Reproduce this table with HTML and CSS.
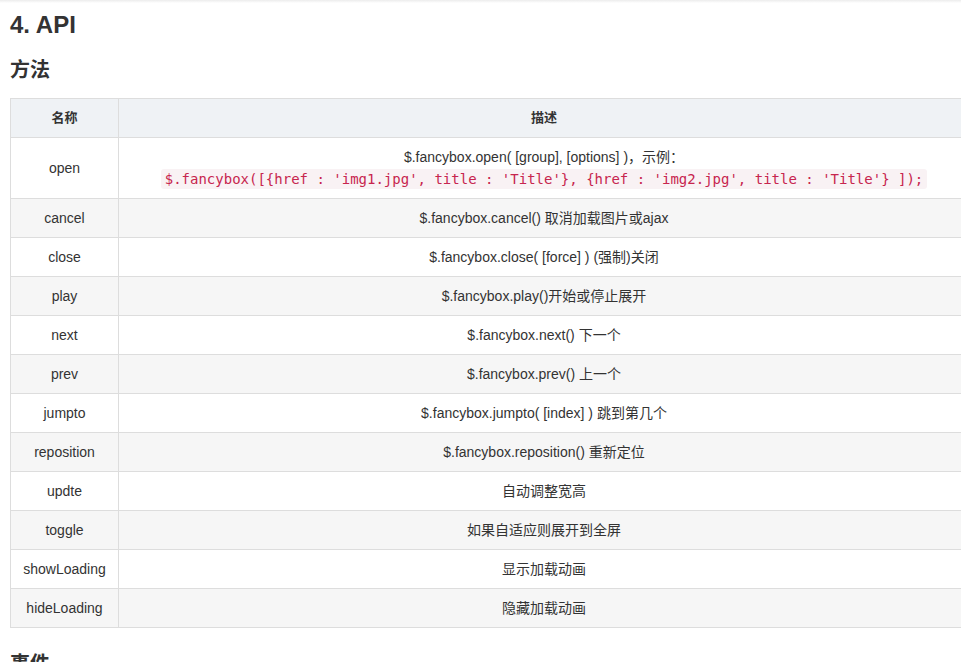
FILE: index.html
```html
<!DOCTYPE html>
<html lang="zh">
<head>
<meta charset="utf-8">
<title>API</title>
<link rel="stylesheet" href="styles.css">
</head>
<body>
<div class="topshadow"></div>
<div class="content">
  <h2 class="title">4. API</h2>
  <h3 class="subtitle">方法</h3>
  <table class="api">
    <thead>
      <tr><th class="c-name">名称</th><th>描述</th></tr>
    </thead>
    <tbody>
      <tr><td class="c-name">open</td><td>$.fancybox.open( [group], [options] )，示例：<br><code>$.fancybox([{href : 'img1.jpg', title : 'Title'}, {href : 'img2.jpg', title : 'Title'} ]);</code></td></tr>
      <tr><td class="c-name">cancel</td><td>$.fancybox.cancel() 取消加载图片或ajax</td></tr>
      <tr><td class="c-name">close</td><td>$.fancybox.close( [force] ) (强制)关闭</td></tr>
      <tr><td class="c-name">play</td><td>$.fancybox.play()开始或停止展开</td></tr>
      <tr><td class="c-name">next</td><td>$.fancybox.next() 下一个</td></tr>
      <tr><td class="c-name">prev</td><td>$.fancybox.prev() 上一个</td></tr>
      <tr><td class="c-name">jumpto</td><td>$.fancybox.jumpto( [index] ) 跳到第几个</td></tr>
      <tr><td class="c-name">reposition</td><td>$.fancybox.reposition() 重新定位</td></tr>
      <tr><td class="c-name">updte</td><td>自动调整宽高</td></tr>
      <tr><td class="c-name">toggle</td><td>如果自适应则展开到全屏</td></tr>
      <tr><td class="c-name">showLoading</td><td>显示加载动画</td></tr>
      <tr><td class="c-name">hideLoading</td><td>隐藏加载动画</td></tr>
    </tbody>
  </table>
  <h3 class="subtitle next">事件</h3>
</div>
</body>
</html>
```
FILE: styles.css
```css
html, body {
  margin: 0;
  padding: 0;
  overflow: hidden;
  background: #fff;
}
body {
  font-family: "Liberation Sans", Arial, "Noto Sans CJK SC", sans-serif;
  font-size: 14px;
  line-height: 22px;
  color: #333;
}
.topshadow {
  height: 3px;
  background: linear-gradient(#ececec, #fff);
}
.content {
  padding: 0 10px;
}
.title {
  margin: 7px 0 0;
  font-size: 24px;
  line-height: 30px;
  font-weight: bold;
  color: #333;
}
.subtitle {
  margin: 16px 0 0;
  font-size: 20px;
  line-height: 28px;
  font-weight: bold;
  color: #333;
}
.api {
  margin-top: 14px;
  width: 960px;
  border-collapse: collapse;
  border-spacing: 0;
}
.api th, .api td {
  border: 1px solid #ddd;
  padding: 8px;
  text-align: center;
  vertical-align: middle;
}
.api th {
  background: #eff2f5;
  font-size: 13px;
  font-weight: bold;
  line-height: 22px;
}
.api .c-name {
  width: 91px;
}
.api tbody tr:nth-child(even) td {
  background: #f6f6f6;
}
.api code {
  font-family: "DejaVu Sans Mono", "Liberation Mono", monospace;
  font-size: 14px;
  color: #c7254e;
  background: #f9f2f4;
  padding: 2px 4px;
  border-radius: 3px;
}
.next {
  margin-top: 22px;
}
```
